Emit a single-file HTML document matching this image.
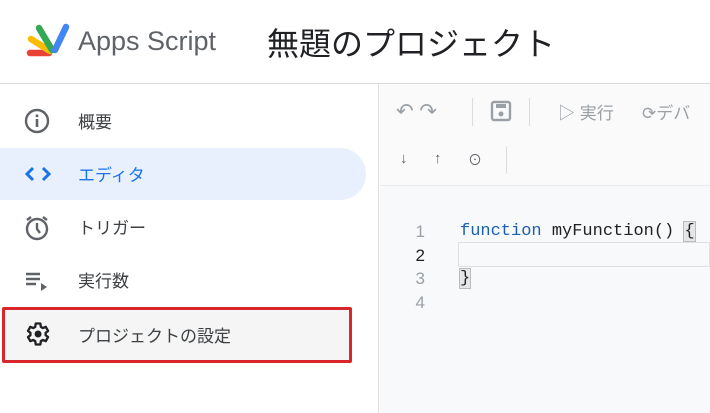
<!DOCTYPE html>
<html><head><meta charset="utf-8"><style>
*{margin:0;padding:0;box-sizing:border-box}
body{width:710px;height:413px;overflow:hidden;background:#fff;font-family:"Liberation Sans","Noto Sans CJK JP",sans-serif;position:relative;color:#3c4043}
.abs{position:absolute}
.hdr{left:0;top:0;width:710px;height:84px;border-bottom:1px solid #dadce0;background:#fff}
.side{left:0;top:84px;width:379px;height:329px;border-right:1px solid #e0e0e0;background:#fff}
.item{position:absolute;left:0;width:366px;height:52px;font-size:17px;color:#3c4043}
.item span{position:absolute;left:78px;top:13px}
.item svg{position:absolute;left:24px;top:13px}
.ed{left:380px;top:84px;width:330px;height:329px;background:#f8f9fa}
.code{font-family:"Liberation Mono",monospace;font-size:17px}
</style></head><body>
<div class="abs hdr">
 <svg class="abs" style="left:25px;top:22px" width="46" height="36" viewBox="0 0 46 36">
  <g stroke-linecap="round" stroke-width="6.5" fill="none">
   <line x1="5" y1="31" x2="24" y2="31" stroke="#ea4335"/>
   <line x1="6" y1="17" x2="25" y2="29" stroke="#fbbc04"/>
   <line x1="14" y1="6" x2="27" y2="28" stroke="#34a853"/>
   <line x1="41" y1="5" x2="30" y2="28" stroke="#4285f4"/>
  </g>
 </svg>
 <div class="abs" style="left:78px;top:26px;font-size:27px;color:#5f6368">Apps Script</div>
 <div class="abs" style="left:267px;top:19px;font-size:32px;color:#202124">無題のプロジェクト</div>
</div>
<div class="abs side">
 <div class="item" style="top:11px"><svg width="26" height="26" viewBox="0 0 26 26"><circle cx="13" cy="13" r="11" fill="none" stroke="#5f6368" stroke-width="2.4"/><rect x="11.7" y="11" width="2.6" height="8" fill="#5f6368"/><rect x="11.7" y="6.5" width="2.6" height="2.6" fill="#5f6368"/></svg><span>概要</span></div>
 <div class="item" style="top:64px;background:#e8f0fe;border-radius:0 26px 26px 0;color:#1a73e8"><svg width="28" height="26" viewBox="0 0 28 26"><path d="M9 7 L3 13 L9 19 M19 7 L25 13 L19 19" fill="none" stroke="#1a73e8" stroke-width="3"/></svg><span>エディタ</span></div>
 <div class="item" style="top:117px"><svg width="26" height="28" viewBox="0 0 26 28"><circle cx="13" cy="15" r="10" fill="none" stroke="#5f6368" stroke-width="2.4"/><path d="M13 9v6l3 4M3 6l4-3M23 6l-4-3" fill="none" stroke="#5f6368" stroke-width="2.4"/></svg><span>トリガー</span></div>
 <div class="item" style="top:170px"><svg width="28" height="28" viewBox="0 0 28 28"><path d="M2 7h14M2 12h14M2 17h10" stroke="#5f6368" stroke-width="2.4"/><path d="M17 16l6 4-6 4z" fill="#5f6368"/></svg><span>実行数</span></div>
</div>
<div class="abs" style="left:2px;top:307px;width:350px;height:56px;border:3px solid #d9262c;border-radius:2px;background:#f5f5f5"></div>
<svg class="abs" style="left:23px;top:320px" width="28" height="28" viewBox="0 0 24 24"><path fill="none" stroke="#202124" stroke-width="2" stroke-linejoin="round" d="M19.4 13a7.5 7.5 0 0 0 0-2l2.1-1.6-2-3.5-2.5 1a7 7 0 0 0-1.7-1L14.9 3h-4l-.4 2.9a7 7 0 0 0-1.7 1l-2.5-1-2 3.5L6.4 11a7.5 7.5 0 0 0 0 2l-2.1 1.6 2 3.5 2.5-1a7 7 0 0 0 1.7 1l.4 2.9h4l.4-2.9a7 7 0 0 0 1.7-1l2.5 1 2-3.5z"/><circle cx="12.9" cy="12" r="3" fill="#202124"/></svg>
<div class="abs" style="left:78px;top:322px;font-size:17px;color:#3c4043">プロジェクトの設定</div>
<div class="abs ed">
 <div class="abs" style="left:0;top:0;width:330px;height:102px;border-bottom:1px solid #e8eaed;background:#fafafa"></div>
 <div class="abs" style="left:16px;top:15px;font-size:21px;color:#9aa0a6">↶ ↷</div>
 <div class="abs" style="left:92px;top:14px;width:1px;height:28px;background:#dadce0"></div>
 <svg class="abs" style="left:110px;top:16px" width="22" height="22" viewBox="0 0 22 22"><rect x="2" y="2" width="18" height="18" rx="2" fill="none" stroke="#9aa0a6" stroke-width="2.4"/><rect x="6" y="4" width="10" height="4" fill="#9aa0a6"/><circle cx="11" cy="14" r="2.5" fill="#9aa0a6"/></svg>
 <div class="abs" style="left:149px;top:14px;width:1px;height:28px;background:#dadce0"></div>
 <div class="abs" style="left:178px;top:15px;font-size:17px;color:#9aa0a6">▷ 実行</div>
 <div class="abs" style="left:262px;top:15px;font-size:17px;color:#9aa0a6">⟳デバ</div>
 <div class="abs" style="left:20px;top:66px;font-size:15px;color:#5f6368">↓</div>
 <div class="abs" style="left:54px;top:66px;font-size:15px;color:#5f6368">↑</div>
 <div class="abs" style="left:88px;top:66px;font-size:14px;color:#5f6368">⊙</div>
 <div class="abs" style="left:126px;top:62px;width:1px;height:28px;background:#dadce0"></div>
 <div class="abs" style="left:78px;top:158px;width:252px;height:25px;border:1px solid #e0e0e0"></div>
 <div class="abs" style="left:33px;top:136px;font-size:17px;line-height:23.5px;color:#9aa0a6;text-align:right;width:12px">1<br><span style="color:#202124">2</span><br>3<br>4</div>
 <div class="abs code" style="left:80px;top:136px;line-height:23.5px;color:#202124"><span style="color:#1a5fb4">function</span> myFunction() <span style="background:#e6e6e6;outline:1px solid #bbb">{</span><br><br><span style="background:#e6e6e6;outline:1px solid #bbb">}</span></div>
</div>
</body></html>
